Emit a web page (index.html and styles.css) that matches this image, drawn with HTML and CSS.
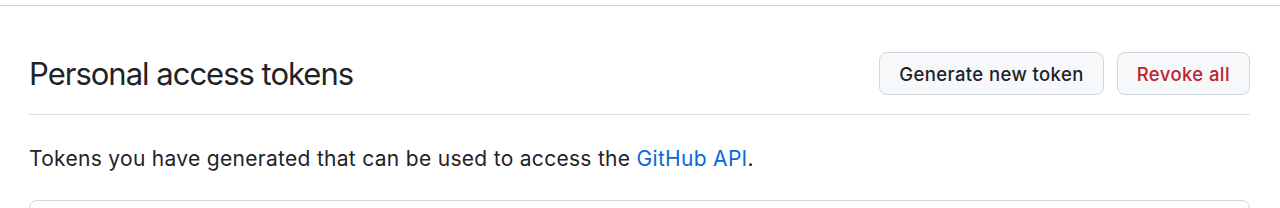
FILE: index.html
```html
<!DOCTYPE html>
<html>
<head>
<meta charset="utf-8">
<link rel="stylesheet" href="styles.css">
</head>
<body>
<div class="topline"></div>
<main class="content">
  <div class="subhead">
    <h2 class="subhead-heading">Personal access tokens</h2>
    <div class="actions">
      <button class="btn">Generate new token</button>
      <button class="btn btn-danger">Revoke all</button>
    </div>
  </div>
  <p class="note">Tokens you have generated that can be used to access the <a href="#">GitHub API</a>.</p>
  <div class="box"></div>
</main>
</body>
</html>
```
FILE: styles.css
```css
html, body {
  margin: 0;
  padding: 0;
  background: #ffffff;
}
body {
  font-family: Inter, "Liberation Sans", sans-serif;
  color: #1f2328;
  width: 1280px;
  height: 208px;
  overflow: hidden;
}
.topline {
  margin-top: 5px;
  height: 1px;
  background: #ccd3dc;
}
.content {
  padding: 0 30px 0 29px;
}
.subhead {
  display: flex;
  align-items: center;
  justify-content: space-between;
  margin-top: 46px;
  padding-bottom: 19px;
  border-bottom: 1px solid #d8dee4;
}
.subhead-heading {
  margin: 0;
  font-size: 31px;
  font-weight: 400;
  letter-spacing: -1px;
  line-height: 38px;
  color: #1f2328;
}
.actions {
  display: flex;
  gap: 13px;
}
.btn {
  font-family: inherit;
  font-size: 18.5px;
  font-weight: 500;
  letter-spacing: 0.4px;
  height: 43px;
  padding: 0 19px;
  border: 1.5px solid #d0d7de;
  border-radius: 8px;
  background: #f6f8fa;
  color: #1f2328;
}
.btn-danger {
  color: #c0232c;
}
.note {
  margin: 31px 0 0;
  font-size: 21px;
  letter-spacing: 0.3px;
  line-height: 26px;
}
.note a {
  color: #0969da;
  text-decoration: none;
}
.box {
  margin-top: 28px;
  height: 40px;
  border: 1.5px solid #d0d7de;
  border-radius: 8px;
}
```
